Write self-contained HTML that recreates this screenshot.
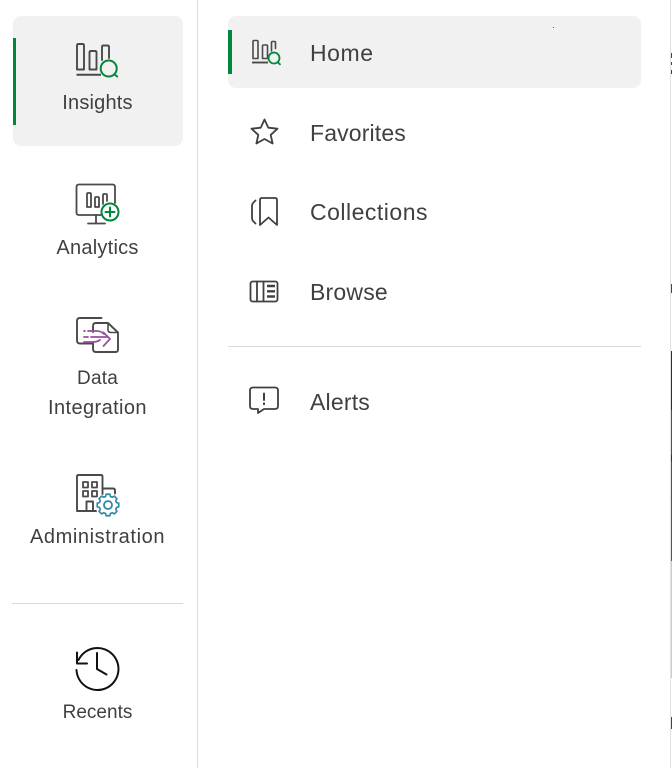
<!DOCTYPE html>
<html><head><meta charset="utf-8"><style>
html,body{margin:0;padding:0;background:#fff}
body{width:672px;height:768px;position:relative;overflow:hidden;font-family:"Liberation Sans",sans-serif;color:#404040}
.a{position:absolute}
.t{position:absolute;white-space:nowrap;font-size:23px;line-height:26px}
.l{transform:translateX(-50%);left:97.5px;font-size:20px}
svg{position:absolute;overflow:visible;fill:none}
</style></head><body>
<div class="a" style="left:197px;top:0;width:1px;height:768px;background:#dcdcdc"></div>
<div class="a" style="left:13px;top:16px;width:170px;height:130px;background:#f1f1f1;border-radius:8px"></div>
<div class="a" style="left:13px;top:38px;width:3px;height:87px;background:#00873d"></div>
<div class="a" style="left:228px;top:16px;width:413px;height:72px;background:#f1f1f1;border-radius:8px"></div>
<div class="a" style="left:228px;top:30px;width:4px;height:44px;background:#00873d"></div>
<div class="a" style="left:12px;top:603px;width:171px;height:1px;background:#d9d9d9"></div>
<div class="a" style="left:228px;top:346px;width:413px;height:1px;background:#d9d9d9"></div>
<div class="a" style="left:553px;top:27px;width:1px;height:1px;background:#555"></div>
<div class="a" style="left:670px;top:0;width:1px;height:768px;background:#e2e2e2"></div>
<div class="a" style="left:671px;top:53px;width:1px;height:5px;background:#444"></div>
<div class="a" style="left:671px;top:62px;width:1px;height:3px;background:#444"></div>
<div class="a" style="left:671px;top:70px;width:1px;height:4px;background:#444"></div>
<div class="a" style="left:671px;top:284px;width:1px;height:9px;background:#445"></div>
<div class="a" style="left:671px;top:351px;width:1px;height:110px;background:#3a2a28"></div>
<div class="a" style="left:671px;top:410px;width:1px;height:45px;background:#2a6a4a"></div>
<div class="a" style="left:671px;top:461px;width:1px;height:40px;background:#5a5050"></div>
<div class="a" style="left:671px;top:501px;width:1px;height:60px;background:#3a6a50"></div>
<div class="a" style="left:671px;top:561px;width:1px;height:117px;background:#dcc8c0"></div>
<div class="a" style="left:671px;top:717px;width:1px;height:12px;background:#444"></div>

<div class="t l" style="top:90px;letter-spacing:.2px">Insights</div>
<div class="t l" style="top:235px;letter-spacing:.25px">Analytics</div>
<div class="t l" style="top:366px;font-size:19px;letter-spacing:.2px">Data</div>
<div class="t l" style="top:395px;letter-spacing:.4px">Integration</div>
<div class="t l" style="top:524px;letter-spacing:.6px">Administration</div>
<div class="t l" style="top:700px;font-size:19px">Recents</div>

<div class="t" style="left:310px;top:40px;letter-spacing:.55px">Home</div>
<div class="t" style="left:310px;top:120px;letter-spacing:.15px">Favorites</div>
<div class="t" style="left:310px;top:199px;letter-spacing:.5px">Collections</div>
<div class="t" style="left:310px;top:279px;letter-spacing:.2px">Browse</div>
<div class="t" style="left:310px;top:389px;letter-spacing:.2px">Alerts</div>

<svg style="left:0;top:0" width="198" height="768" stroke-linecap="round" stroke-linejoin="round">
<!-- Insights -->
<g stroke="#4a4a4a" stroke-width="1.900">
<path d="M77 69.500V45.500q0-1.500 1.500-1.500h4q1.500 0 1.500 1.500V69.500z"/>
<path d="M89.500 69.500V52.500q0-1.500 1.500-1.500h4q1.500 0 1.500 1.500V69.500z"/>
<path d="M102 60V47q0-1.500 1.500-1.500h4q1.500 0 1.500 1.500v11"/>
<path d="M76.500 74.800h24.500" stroke-width="2" stroke-linecap="butt"/>
</g>
<g stroke="#00873d" stroke-width="2"><circle cx="108.700" cy="68.500" r="8"/><path d="M114.500 74.500l2.700 2"/></g>
<!-- Analytics -->
<g stroke="#4a4a4a" stroke-width="1.800">
<path d="M102 215H79q-2.500 0-2.500-2.500V187q0-2.500 2.500-2.500h33.500q2.500 0 2.500 2.500V203"/>
<path d="M96 215v8M88 223.500h17"/>
<path d="M87 207v-13q0-1 1-1h2q1 0 1 1v13z"/>
<path d="M95 207v-9q0-1 1-1h2q1 0 1 1v9z"/>
<path d="M103 204v-9q0-1 1-1h2q1 0 1 1v6"/>
</g>
<g stroke="#00873d" stroke-width="2"><circle cx="110" cy="212" r="8.500"/><path d="M110 207.500v9M105.500 212h9"/></g>
<!-- Data Integration -->
<g stroke="#4a4a4a" stroke-width="1.900">
<path d="M101.500 318H80q-3 0-3 3v19.500q0 3 3 3h12"/>
<path d="M93 332v-6q0-3 3-3h12l10 9.500v17q0 2.500-2.500 2.500H96q-3 0-3-3v-7"/>
<path d="M108 323.500v6q0 3 3 3h6" stroke-width="1.600"/>
</g>
<g stroke="#9b4f9e" stroke-width="1.800"><path d="M84 331h1M88 331h9q4 0 7 3M84 337h4M91 337h17M84 342h9q4 0 7-2"/><path d="M103.500 332.500l6.500 6.500-6.500 7"/></g>
<!-- Administration -->
<g stroke="#4a4a4a" stroke-width="1.900">
<path d="M96 511H77V476.500q0-1.500 1.500-1.500H101q1.500 0 1.500 1.500V494"/>
<path d="M102.500 488.500H113q2 0 2 2v3"/>
<path d="M86.500 511v-9.500h6.500v9.500"/>
<rect x="83" y="482" width="5" height="5.500" stroke-width="1.800"/><rect x="92" y="482" width="5" height="5.500" stroke-width="1.800"/>
<rect x="83" y="491" width="5" height="5.500" stroke-width="1.800"/><rect x="92" y="491" width="5" height="5.500" stroke-width="1.800"/>
</g>
<g stroke="#2f8aa6" stroke-width="1.800">
<circle cx="108" cy="505" r="4"/>
<path transform="translate(108 505) scale(.92) translate(-108.500 -506.700)" d="M106.500 495h4l.6 2.400 2.100.9 2.200-1.300 2.800 2.800-1.300 2.200.9 2.100 2.400.6v4l-2.400.6-.9 2.100 1.300 2.200-2.800 2.800-2.200-1.300-2.100.9-.6 2.400h-4l-.6-2.400-2.100-.9-2.200 1.300-2.800-2.800 1.300-2.200-.9-2.100-2.400-.6v-4l2.400-.6.9-2.100-1.300-2.200 2.800-2.800 2.200 1.300 2.100-.9z"/>
</g>
<!-- Recents -->
<g stroke="#111" stroke-width="2">
<path d="M78.500 660A21 21 0 1 1 76.500 670"/>
<path d="M77 652.500v11h10"/>
<path d="M97 653v16l9.500 5.500"/>
</g>
</svg>

<svg style="left:228px;top:0" width="80" height="430" stroke-linecap="round" stroke-linejoin="round">
<!-- Home -->
<g stroke="#4a4a4a" stroke-width="1.600">
<path d="M25 58.500V41.500q0-1 1-1h3q1 0 1 1v17z"/>
<path d="M34.500 58.500V46q0-1 1-1h3q1 0 1 1v12.500z"/>
<path d="M43.500 51V42.500q0-1 1-1h2q1 0 1 1v6"/>
<path d="M24 62.500h16" stroke-width="1.900" stroke-linecap="butt"/>
</g>
<g stroke="#00873d" stroke-width="1.800"><circle cx="46" cy="58" r="5.500"/><path d="M50 62.500l2 1.800"/></g>
<!-- Star -->
<path stroke="#404040" stroke-width="1.800" d="M36.500 119.500l3.800 8.200 9.200 1-6.800 6.200 1.900 8.600-8.100-4.500-8.100 4.500 1.900-8.600-6.800-6.200 9.200-1z"/>
<!-- Collections -->
<g stroke="#404040" stroke-width="1.800">
<path d="M34 198h13q2 0 2 2v25l-8.500-7.500L32 225v-25q0-2 2-2z"/>
<path d="M27.500 200.500l-2.500 2.500q-1 1-1 3v12q0 2 1 3l2.500 2.500"/>
</g>
<!-- Browse -->
<g stroke="#404040" stroke-width="1.800">
<rect x="22.500" y="281.500" width="27" height="20" rx="2"/>
<path d="M29 281.500v20M35.500 281.500v20"/>
<path d="M39 286h8M39 291.300h8M39 296.500h8" stroke-width="2.400" stroke-linecap="butt"/>
</g>
<!-- Alerts -->
<g stroke="#404040" stroke-width="1.800">
<path d="M25 387.500h22q3 0 3 3v15.500q0 3-3 3H36l-6 4v-4h-5q-3 0-3-3v-15.500q0-3 3-3z"/>
<path d="M36 393.500v6.500M36 403.300v.9" stroke-width="2"/>
</g>
</svg>
</body></html>
